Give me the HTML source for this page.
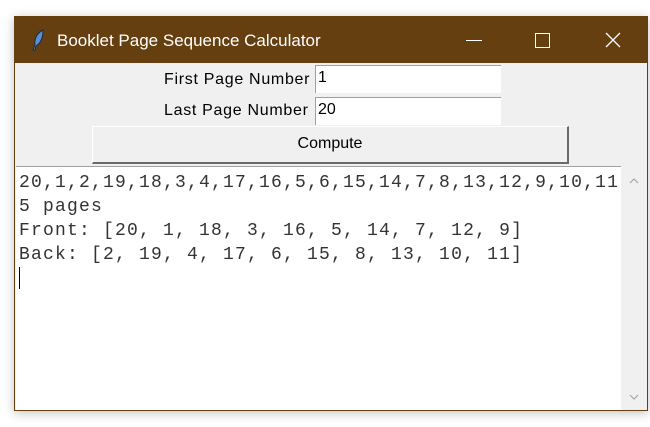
<!DOCTYPE html>
<html><head><meta charset="utf-8"><style>
html,body{margin:0;padding:0;width:650px;height:427px;background:#fff;overflow:hidden;font-family:"Liberation Sans",sans-serif}
.win{position:absolute;left:14px;top:16px;width:634px;height:395px;background:#f0f0f0;box-shadow:0 2px 10px rgba(0,0,0,.25);border:1px solid #653f10;box-sizing:border-box}
.title{position:absolute;left:0;top:0;width:100%;height:46px;background:#653f10;color:#fff;font-size:17px}
.title .t{position:absolute;left:42px;top:14px}
.lbl{position:absolute;font-size:16px;color:#000;letter-spacing:0.7px}
.ent{position:absolute;left:300px;width:186px;height:28px;background:#fff;border-top:1px solid #a0a0a0;border-left:1px solid #a0a0a0;box-sizing:border-box;font-size:16px;padding:3px 2px}
.btn{position:absolute;left:77px;top:109px;width:477px;height:38px;background:#f0f0f0;border:1px solid #fff;border-right:2px solid #6a6a6a;border-bottom:2px solid #6a6a6a;box-sizing:border-box;text-align:center;font-size:16px;line-height:34px}
.txt{position:absolute;left:1px;top:149px;width:605px;height:244px;overflow:hidden;background:#fff;border-top:1px solid #a0a0a0;box-sizing:border-box;font-family:"Liberation Mono",monospace;font-size:18px;letter-spacing:1.2px;line-height:24px;padding:4px 0 0 3px;white-space:pre;color:#333}
.sb{position:absolute;left:606px;top:149px;width:26px;height:244px;background:#f0f0f0}
</style></head><body>
<div class="win">
 <div class="title">
  <svg style="position:absolute;left:16px;top:12px" width="14" height="22" viewBox="0 0 14 22"><path d="M12 1 C6 4 3 10 4 16 L2 21 L4 21 L5 17 C10 14 12 8 12 1Z" fill="#5a8fd8" stroke="#1a2a40" stroke-width="1"/></svg>
  <span class="t">Booklet Page Sequence Calculator</span>
  <div style="position:absolute;left:451px;top:23px;width:16px;height:1px;background:#fff"></div>
  <div style="position:absolute;left:520px;top:16px;width:13px;height:13px;border:1px solid #fff"></div>
  <svg style="position:absolute;left:590px;top:15px" width="16" height="16"><path d="M1 1L15 15M15 1L1 15" stroke="#fff" stroke-width="1.3"/></svg>
 </div>
 <div class="lbl" style="left:149px;top:54px">First Page Number</div>
 <div class="ent" style="top:48px">1</div>
 <div class="lbl" style="left:149px;top:85px">Last Page Number</div>
 <div class="ent" style="top:80px">20</div>
 <div class="btn">Compute</div>
 <div class="txt">20,1,2,19,18,3,4,17,16,5,6,15,14,7,8,13,12,9,10,11
5 pages
Front: [20, 1, 18, 3, 16, 5, 14, 7, 12, 9]
Back: [2, 19, 4, 17, 6, 15, 8, 13, 10, 11]
<span style="display:inline-block;width:1px;height:22px;background:#000;vertical-align:middle"></span></div>
 <div class="sb">
  <svg style="position:absolute;left:8px;top:12px" width="10" height="6"><path d="M1 5L5 1L9 5" stroke="#a0a0a0" fill="none"/></svg>
  <svg style="position:absolute;left:8px;top:228px" width="10" height="6"><path d="M1 1L5 5L9 1" stroke="#a0a0a0" fill="none"/></svg>
 </div>
</div>
</body></html>
